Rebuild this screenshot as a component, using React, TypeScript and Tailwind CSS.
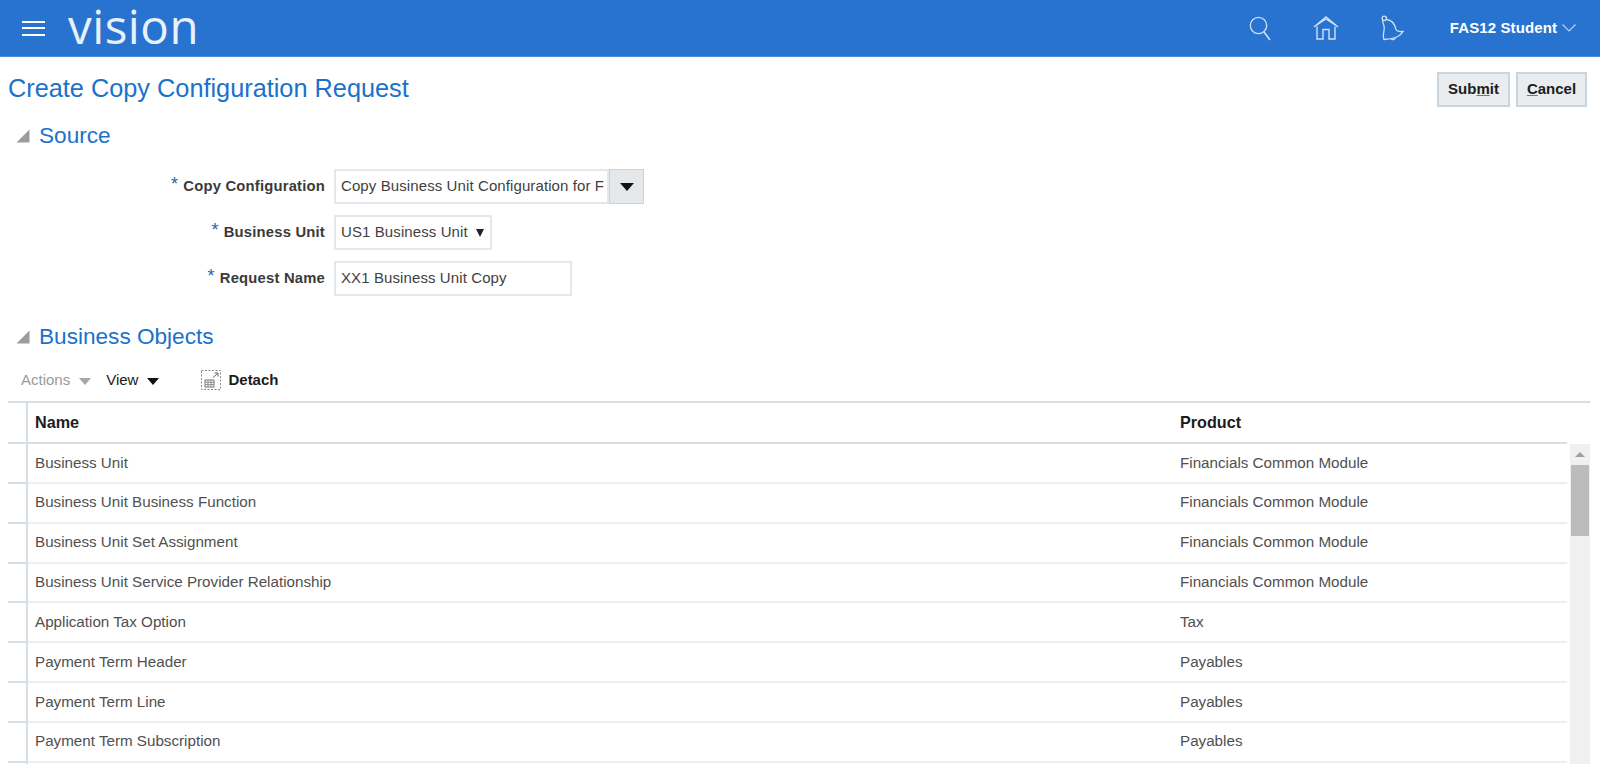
import React from 'react';

const rows = [
  ['Business Unit', 'Financials Common Module'],
  ['Business Unit Business Function', 'Financials Common Module'],
  ['Business Unit Set Assignment', 'Financials Common Module'],
  ['Business Unit Service Provider Relationship', 'Financials Common Module'],
  ['Application Tax Option', 'Tax'],
  ['Payment Term Header', 'Payables'],
  ['Payment Term Line', 'Payables'],
  ['Payment Term Subscription', 'Payables'],
  ['', ''],
];

const Disclosure = () => (
  <svg width="14" height="14" viewBox="0 0 14 14" className="shrink-0">
    <path d="M13.5 0.5V13.5H0.5Z" fill="#9a9c9e" />
  </svg>
);

const Arrow = ({ color = '#111', w = 14, h = 8 }: { color?: string; w?: number; h?: number }) => (
  <svg width={w} height={h} viewBox="0 0 14 8" preserveAspectRatio="none">
    <path d="M0 0H14L7 8Z" fill={color} />
  </svg>
);

const Field = ({ label, children }: { label: string; children: React.ReactNode }) => (
  <>
    <div className="flex items-center justify-end text-[14.8px] font-bold text-[#3a3a3a] tracking-[0.2px]">
      <span className="text-[#1a66b5] mr-[5px] -mt-[5px] text-[18px] font-normal">*</span>
      {label}
    </div>
    <div className="flex">{children}</div>
  </>
);

export default function App() {
  return (
    <div className="h-[764px] w-[1600px] overflow-hidden bg-white font-['Liberation_Sans',Arial,sans-serif] text-[#3f3f3f]">
      {/* top bar */}
      <header className="h-[57px] bg-[#2872d0] border-b border-[#4a8ede] flex items-center text-white">
        <div className="ml-[22px] w-[23px] flex flex-col gap-[4.5px]">
          <div className="h-[2px] bg-white" />
          <div className="h-[2px] bg-white" />
          <div className="h-[2px] bg-white" />
        </div>
        <span className="ml-[23px] -mt-[5px] font-['Open_Sans',sans-serif] font-normal text-[47.5px] leading-[50px] tracking-[0.5px] text-[#e8f0fa]">
          vision
        </span>
        <div className="ml-auto flex items-center">
          <svg width="22" height="25" viewBox="0 0 22 25" fill="none" stroke="#cfe0f5" strokeWidth="1.3" className="mr-[42px]">
            <circle cx="9.5" cy="9.5" r="8.2" />
            <path d="M15 16L21 24" strokeWidth="1.6" />
          </svg>
          <svg width="26" height="24" viewBox="0 0 26 24" fill="none" stroke="#cfe0f5" strokeWidth="1.4" className="mr-[42px]">
            <path d="M1 11L13 1L25 11M3 9.5L13 3L23 9.5M4 10.5V23H10V13.5H16V23H22V10.5" />
          </svg>
          <svg width="23" height="26" viewBox="0 0 23 26" fill="none" stroke="#cfe0f5" strokeWidth="1.3" className="mr-[46px]">
            <circle cx="3.3" cy="3.3" r="2.2" />
            <path d="M5.5 4.5C11 5 14 10 15 14.5C16 17 19 16.5 22 16.5C20 19.5 17.5 21.5 14.5 22.5C11 23.8 7 24.3 3 24.5C1 20 4 16 3 11C2.5 8.5 1.2 7 1.8 5" />
            <path d="M10 23.5A2.5 2.5 0 0 0 14.5 22.5" />
          </svg>
          <span className="text-[15px] font-bold text-white tracking-[0.1px]">FAS12 Student</span>
          <svg width="14" height="8" viewBox="0 0 14 8" fill="none" stroke="#bcd4f2" strokeWidth="1.1" className="ml-[5px] mr-[24px]">
            <path d="M0.5 0.5L7 7L13.5 0.5" />
          </svg>
        </div>
      </header>

      {/* page title */}
      <div className="flex items-start justify-between pl-[8px] pr-[13px] pt-[15px]">
        <h1 className="text-[25.3px] leading-[30px] mt-[1px] text-[#1a72cb]">Create Copy Configuration Request</h1>
        <div className="flex gap-[6px]">
          <button className="w-[73px] h-[35px] bg-[#e9edf0] border-2 border-[#c8d4de] text-[15px] font-bold text-[#1c1c1c]">
            Sub<u className="decoration-[#777]">m</u>it
          </button>
          <button className="w-[71px] h-[35px] bg-[#e9edf0] border-2 border-[#c8d4de] text-[15px] font-bold text-[#1c1c1c]">
            <u className="decoration-[#777]">C</u>ancel
          </button>
        </div>
      </div>

      {/* source */}
      <section className="flex items-center pl-[16px] mt-[14px] h-[30px]">
        <Disclosure />
        <h2 className="ml-[9px] text-[22.6px] text-[#1a72cb]">Source</h2>
      </section>

      <div className="grid grid-cols-[325px_auto] gap-x-[9px] gap-y-[11px] auto-rows-[35px] justify-start mt-[18px]">
        <Field label="Copy Configuration">
          <div className="w-[275px] h-[35px] border-2 border-[#e3e8ec] flex items-center pl-[5px] text-[15px] overflow-hidden whitespace-nowrap tracking-[0.1px]">
            <span className="overflow-hidden">Copy Business Unit Configuration for F</span>
          </div>
          <div className="w-[35px] h-[35px] bg-[#e4e8eb] border border-[#c8d2da] flex items-center justify-center">
            <Arrow />
          </div>
        </Field>
        <Field label="Business Unit">
          <div className="w-[158px] h-[35px] border-2 border-[#e3e8ec] flex items-center pl-[5px] text-[15px] tracking-[0.1px]">
            US1 Business Unit
            <span className="ml-[8px]"><Arrow w={8} h={8} color="#222" /></span>
          </div>
        </Field>
        <Field label="Request Name">
          <div className="w-[238px] h-[35px] border-2 border-[#e3e8ec] flex items-center pl-[5px] text-[15px] tracking-[0.1px]">
            XX1 Business Unit Copy
          </div>
        </Field>
      </div>

      {/* business objects */}
      <section className="flex items-center pl-[16px] mt-[26px] h-[30px]">
        <Disclosure />
        <h2 className="ml-[9px] text-[22.6px] text-[#1a72cb]">Business Objects</h2>
      </section>

      <div className="flex items-center h-[30px] mt-[13px] pl-[21px] text-[15px]">
        <span className="text-[#9a9a9a]">Actions</span>
        <span className="ml-[9px] mt-[3px]"><Arrow color="#a5a5a5" w={12} h={7} /></span>
        <span className="ml-[15px] text-[#1c1c1c]">View</span>
        <span className="ml-[9px] mt-[3px]"><Arrow color="#111" w={12} h={7} /></span>
        <svg width="20" height="20" viewBox="0 0 20 20" fill="none" className="ml-[42px]">
          <rect x="0.5" y="0.5" width="19" height="19" stroke="#8a8a8a" strokeDasharray="2 1.5" />
          <rect x="4" y="10" width="9" height="7" fill="#fff" stroke="#777" />
          <path d="M4 12.3H13M4 14.6H13M7 10V17M10 10V17" stroke="#777" strokeWidth="0.8" />
          <path d="M12 7.5L16.5 3.5M13.5 3H17V6.5" stroke="#666" />
        </svg>
        <span className="ml-[7px] font-bold text-[#1c1c1c]">Detach</span>
      </div>

      {/* table */}
      <div className="mt-[6px] ml-[8px] w-[1582px] border-t-2 border-[#d6dfe6]">
        <div className="flex h-[41px] w-[1559px] border-b-2 border-[#d6dfe6] font-bold text-[16.2px] text-[#1c1c1c]">
          <div className="w-[18px] border-r-2 border-[#d6dfe6] box-content" />
          <div className="w-[1146px] pl-[7px] flex items-center">Name</div>
          <div className="flex items-center pl-[6px]">Product</div>
        </div>
        <div className="flex">
          <div className="w-[1559px]">
            {rows.map((r) => (
              <div key={r[0]} className="flex h-[39.85px] text-[15.2px] text-[#505050]">
                <div className="w-[18px] box-content border-r-2 border-b-2 border-r-[#d6dfe6] border-b-[#d6dfe6]" />
                <div className="flex flex-1 border-b-2 border-[#eeeeee]">
                  <div className="w-[1146px] pl-[7px] flex items-center">{r[0]}</div>
                  <div className="flex items-center pl-[6px]">{r[1]}</div>
                </div>
              </div>
            ))}
          </div>
          <div className="ml-[3px] w-[20px] h-[340px] bg-[#f0f0f0] flex flex-col items-center">
            <div className="h-[21px] flex items-center justify-center">
              <svg width="10" height="5" viewBox="0 0 10 5"><path d="M0 5H10L5 0Z" fill="#a0a0a0" /></svg>
            </div>
            <div className="w-[18px] h-[71px] bg-[#bcbcbc]" />
          </div>
        </div>
      </div>
    </div>
  );
}
